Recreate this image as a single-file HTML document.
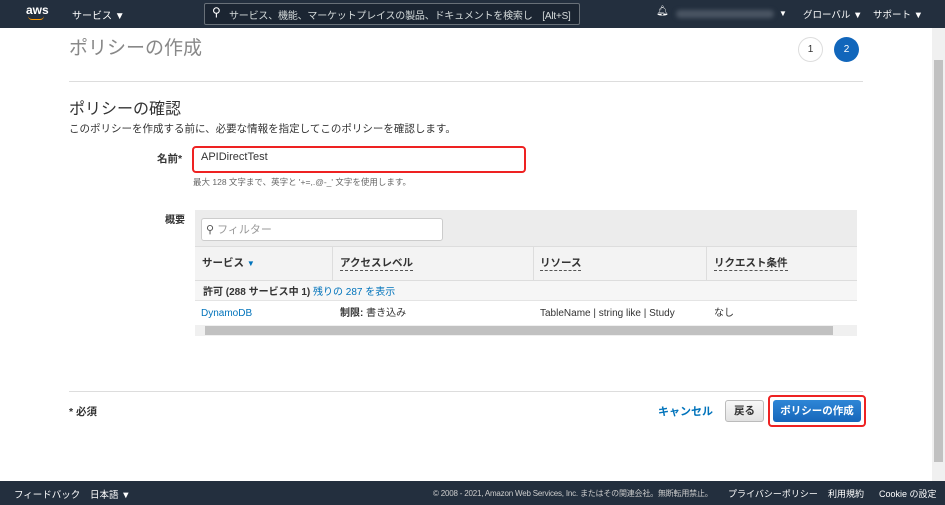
<!DOCTYPE html><html><head><meta charset="utf-8"><style>
*{box-sizing:border-box;margin:0;padding:0}
body{width:945px;height:505px;overflow:hidden;background:#fff;font-family:"Liberation Sans","Noto Sans CJK JP",sans-serif;color:#333;position:relative}
.a{position:absolute;white-space:nowrap}
.nav{left:0;top:0;width:945px;height:28px;background:#232f3e;color:#fff;font-size:10px}
.foot{left:0;top:481px;width:945px;height:24px;background:#232f3e;color:#fff;font-size:9.5px}
.lnk{color:#0073bb}
</style></head><body>
<div class="a nav">
<div class="a" style="left:26px;top:3px;font-size:12px;font-weight:bold;line-height:14px">aws</div>
<div class="a" style="left:28px;top:16px;width:16px;height:4px;border-bottom:1.5px solid #f90;border-radius:0 0 8px 8px"></div>
<div class="a" style="left:72px;top:7px">サービス ▼</div>
<div class="a" style="left:204px;top:3px;width:376px;height:22px;border:1px solid #687078;border-radius:2px;background:#1b2532"></div>
<div class="a" style="left:212px;top:5px;font-size:12px">⚲</div>
<div class="a" style="left:229px;top:7px;font-size:10px;color:#d5dbdb;letter-spacing:-0.2px">サービス、機能、マーケットプレイスの製品、ドキュメントを検索し　[Alt+S]</div>
<div class="a" style="left:656px;top:6px">🔔︎</div>
<div class="a" style="left:676px;top:10px;width:98px;height:8px;background:#4a5563;border-radius:4px;filter:blur(2px)"></div>
<div class="a" style="left:779px;top:9px;font-size:8px">▼</div>
<div class="a" style="left:803px;top:7px;font-size:9.5px">グローバル ▼</div>
<div class="a" style="left:873px;top:7px;font-size:9.5px">サポート ▼</div>
</div>
<div class="a" style="left:932px;top:28px;width:13px;height:453px;background:#f0f0f0"></div>
<div class="a" style="left:934px;top:60px;width:9px;height:402px;background:#c1c1c1"></div>
<div class="a" style="left:69px;top:33px;font-size:19px;color:#888">ポリシーの作成</div>
<div class="a" style="left:798px;top:37px;width:25px;height:25px;border:1px solid #ddd;border-radius:50%;font-size:10px;text-align:center;line-height:23px">1</div>
<div class="a" style="left:834px;top:37px;width:25px;height:25px;background:#1166bb;color:#fff;border-radius:50%;font-size:10px;text-align:center;line-height:25px">2</div>
<div class="a" style="left:69px;top:81px;width:794px;height:1px;background:#ddd"></div>
<div class="a" style="left:69px;top:95px;font-size:16px;color:#333">ポリシーの確認</div>
<div class="a" style="left:69px;top:121px;font-size:10.5px">このポリシーを作成する前に、必要な情報を指定してこのポリシーを確認します。</div>
<div class="a" style="left:157px;top:151px;font-size:10.5px;font-weight:bold">名前*</div>
<div class="a" style="left:192px;top:146px;width:334px;height:27px;border:2px solid #e22;border-radius:4px"></div>
<div class="a" style="left:201px;top:151px;font-size:11px">APIDirectTest</div>
<div class="a" style="left:193px;top:176px;font-size:8.5px;color:#666">最大 128 文字まで、英字と '+=,.@-_' 文字を使用します。</div>
<div class="a" style="left:165px;top:211px;font-size:10px;font-weight:bold">概要</div>
<div class="a" style="left:195px;top:210px;width:662px;height:36px;background:#ececec"></div>
<div class="a" style="left:201px;top:218px;width:242px;height:23px;background:#fff;border:1px solid #ccc;border-radius:3px"></div>
<div class="a" style="left:206px;top:221px;font-size:11px;color:#555">⚲ <span style="color:#999">フィルター</span></div>
<div class="a" style="left:195px;top:246px;width:662px;height:34px;background:#f3f3f3;border-top:1px solid #ddd"></div>
<div class="a" style="left:332px;top:246px;width:1px;height:34px;background:#ddd"></div>
<div class="a" style="left:533px;top:246px;width:1px;height:34px;background:#ddd"></div>
<div class="a" style="left:706px;top:246px;width:1px;height:34px;background:#ddd"></div>
<div class="a" style="left:202px;top:255px;font-size:10.5px;font-weight:bold">サービス <span style="color:#0073bb;font-size:8px">▼</span></div>
<div class="a" style="left:340px;top:255px;font-size:10.5px;font-weight:bold;border-bottom:1px dashed #555">アクセスレベル</div>
<div class="a" style="left:540px;top:255px;font-size:10.5px;font-weight:bold;border-bottom:1px dashed #555">リソース</div>
<div class="a" style="left:714px;top:255px;font-size:10.5px;font-weight:bold;border-bottom:1px dashed #555">リクエスト条件</div>
<div class="a" style="left:195px;top:280px;width:662px;height:21px;background:#f6f6f6;border-top:1px solid #ddd;border-bottom:1px solid #e4e4e4"></div>
<div class="a" style="left:203px;top:283px;font-size:10px;font-weight:bold">許可 (288 サービス中 1) <span class="lnk" style="font-weight:normal">残りの 287 を表示</span></div>
<div class="a lnk" style="left:201px;top:307px;font-size:10px;line-height:14px">DynamoDB</div>
<div class="a" style="left:340px;top:307px;font-size:10px;line-height:14px"><b>制限:</b> 書き込み</div>
<div class="a" style="left:540px;top:307px;font-size:10px;line-height:14px">TableName | string like | Study</div>
<div class="a" style="left:714px;top:307px;font-size:10px;line-height:14px">なし</div>
<div class="a" style="left:195px;top:325px;width:662px;height:11px;background:#f0f0f0"></div>
<div class="a" style="left:205px;top:326px;width:628px;height:9px;background:#c1c1c1"></div>
<div class="a" style="left:69px;top:391px;width:794px;height:1px;background:#ddd"></div>
<div class="a" style="left:69px;top:404px;font-size:10.5px;font-weight:bold">* 必須</div>
<div class="a lnk" style="left:658px;top:403px;font-size:11px;font-weight:bold">キャンセル</div>
<div class="a" style="left:725px;top:400px;width:39px;height:22px;background:linear-gradient(#f8f8f8,#e2e2e2);border:1px solid #bbb;border-radius:3px;font-size:10.5px;font-weight:bold;text-align:center;line-height:20px">戻る</div>
<div class="a" style="left:768px;top:395px;width:98px;height:32px;border:2px solid #e22;border-radius:4px"></div>
<div class="a" style="left:773px;top:400px;width:88px;height:22px;background:linear-gradient(#2e86d6,#1666ba);border-radius:3px;color:#fff;font-size:10.5px;font-weight:bold;text-align:center;line-height:22px">ポリシーの作成</div>
<div class="a foot">
<div class="a" style="left:14px;top:6px">フィードバック</div>
<div class="a" style="left:90px;top:6px">日本語 ▼</div>
<div class="a" style="left:433px;top:7px;font-size:8px;color:#ccc;letter-spacing:-0.2px">© 2008 - 2021, Amazon Web Services, Inc. またはその関連会社。無断転用禁止。</div>
<div class="a" style="left:728px;top:6px;font-size:9px">プライバシーポリシー</div>
<div class="a" style="left:828px;top:6px;font-size:9px">利用規約</div>
<div class="a" style="left:879px;top:6px;font-size:9px">Cookie の設定</div>
</div>
</body></html>
